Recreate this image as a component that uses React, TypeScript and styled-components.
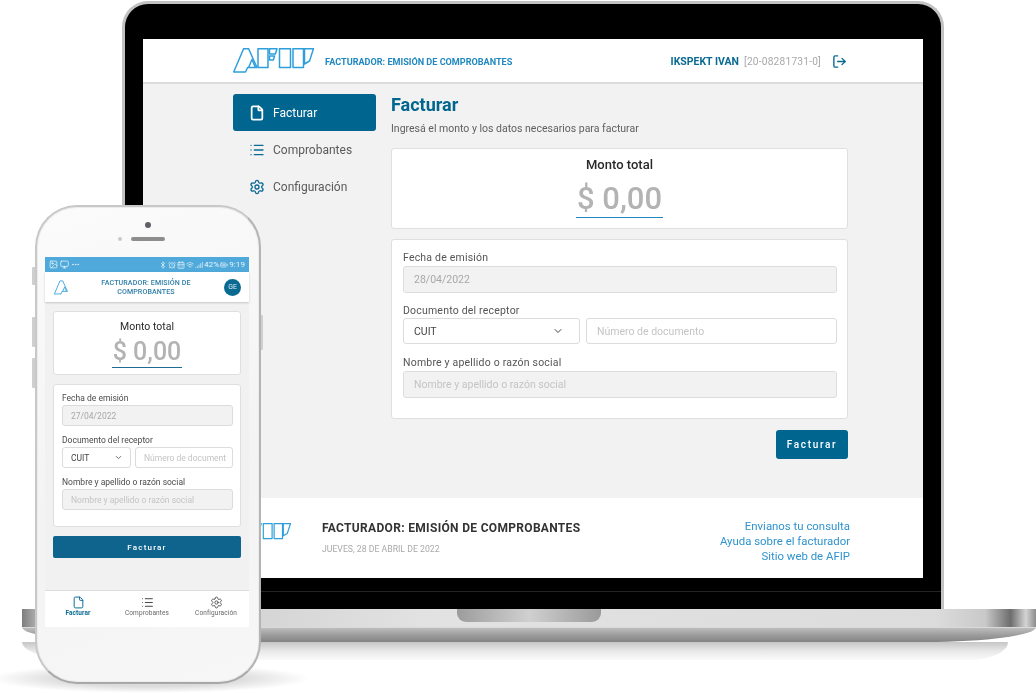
import styled, { createGlobalStyle } from 'styled-components';
import {
    File, List, Settings, LogOut, ChevronDown, Image, Monitor, Ellipsis,
    Bluetooth, AlarmClock, CalendarDays, Wifi, Signal, BatteryFull,
} from 'lucide-react';

const Global = createGlobalStyle`
    html, body { margin: 0; padding: 0; background: #fff; }
    * { box-sizing: border-box; }
    body { font-family: Roboto, "Liberation Sans", sans-serif; }
`;

const Stage = styled.div`
    position: relative;
    width: 1036px;
    height: 693px;
    overflow: hidden;
    background: #fff;
    padding-top: 1px;
`;

/* laptop */
const Lid = styled.div`
    margin-left: 122px;
    width: 822px;
    height: 608px;
    display: flex;
    flex-direction: column;
    padding: 35px 18px 0;
    background: #000;
    border: 3px solid #c2c2c2;
    border-bottom: 0;
    border-radius: 26px 26px 0 0;
`;

const Screen = styled.div`
    height: 539px;
    flex: none;
    display: flex;
    flex-direction: column;
    background: #f2f2f2;
    filter: blur(0.3px);
`;

const HingeLine = styled.div`
    height: 1px;
    margin: 13px -18px 0;
    background: #242424;
`;

const Base = styled.div`
    margin-left: 22px;
    width: 1014px;
`;

const Deck = styled.div`
    height: 18px;
    padding-left: 435px;
    background: linear-gradient(90deg, #7d7d7d 0, #c4c4c4 2%, #e2e2e2 40%, #dcdcdc 90%, #c9c9c9 95%, #6d6d6d 97.5%, #d4d4d4 99%, #8c8c8c 100%);
`;

const Notch = styled.div`
    width: 144px;
    height: 13px;
    border-radius: 0 0 9px 9px;
    background: linear-gradient(90deg, #9c9c9c, #d0d0d0 50%, #9a9a9a);
`;

const DeckFront = styled.div`
    height: 15px;
    border-radius: 0 0 110px 110px / 0 0 15px 15px;
    border-top: 1px solid #d9d9d9;
    background: linear-gradient(180deg, #bdbdbd 0, #a0a0a0 45%, #828282 100%);
`;

const DeckShadow = styled.div`
    width: 986px;
    height: 18px;
    border-radius: 0 0 40px 60px / 0 0 18px 18px;
    background: linear-gradient(180deg, #c6c6c6 0, #e8e8e8 50%, #fafafa 100%);
`;

/* desktop app */
const TopBar = styled.header`
    height: 45px;
    flex: none;
    display: flex;
    align-items: center;
    padding: 0 76px 1px 90px;
    background: #fff;
    border-bottom: 2px solid #dcdcdc;
`;

const LogoSvg = styled.svg<{ $w: number; $h: number }>`
    width: ${p => p.$w}px;
    height: ${p => p.$h}px;
    flex: none;
    fill: none;
    stroke: #2f9fdc;
    stroke-width: 1.5;
    stroke-linejoin: round;
`;

const AppName = styled.div`
    margin-left: 11px;
    margin-top: 4px;
    font-size: 9.1px;
    font-weight: 700;
    color: #1f88c0;
    white-space: nowrap;
`;

const UserBox = styled.div`
    margin-left: auto;
    margin-top: 2px;
    display: flex;
    align-items: center;
    color: #0a6a92;
`;

const UserName = styled.span`
    font-size: 10.5px;
    font-weight: 700;
`;

const UserCuit = styled.span`
    margin-left: 5px;
    margin-right: 11px;
    font-size: 10.2px;
    color: #a9a9a9;
    letter-spacing: 0.2px;
`;

const Body = styled.div`
    flex: 1;
    display: flex;
    padding: 10px 75px 0 90px;
`;

const Sidebar = styled.nav`
    width: 143px;
    flex: none;
    margin-right: 15px;
`;

const NavItem = styled.div<{ $active?: boolean }>`
    height: 37px;
    display: flex;
    align-items: center;
    gap: 8px;
    padding-left: 16px;
    border-radius: 3px;
    font-size: 12px;
    background: ${p => (p.$active ? '#00658f' : 'transparent')};
    color: ${p => (p.$active ? '#fff' : '#5a5a5a')};
    svg { color: ${p => (p.$active ? '#fff' : '#0a6a92')}; flex: none; }
`;

const Main = styled.main`
    width: 457px;
    flex: none;
`;

const PageTitle = styled.h1`
    margin: 0;
    font-size: 18px;
    line-height: 21px;
    font-weight: 700;
    color: #00658f;
`;

const PageHint = styled.p`
    margin: 7px 0 13px;
    font-size: 10.5px;
    line-height: 13px;
    color: #5f5f5f;
`;

const Card = styled.section`
    background: #fff;
    border: 1px solid #dfdfdf;
    border-radius: 3px;
`;

const AmountCard = styled(Card)`
    height: 81px;
    display: flex;
    flex-direction: column;
    align-items: center;
    padding-top: 8px;
    margin-bottom: 10px;
`;

const AmountLabel = styled.div`
    font-size: 13px;
    line-height: 15px;
    font-weight: 500;
    color: #2a2a2a;
`;

const AmountValue = styled.div`
    margin-top: 8px;
    width: 87px;
    text-align: center;
    font-size: 31px;
    line-height: 37px;
    font-weight: 500;
    color: #b3b3b3;
    white-space: nowrap;
    border-bottom: 1px solid #1f8ac0;
`;

const FormCard = styled(Card)`
    height: 180px;
    padding: 10px 10px 0 11px;
`;

const Label = styled.div`
    font-size: 10.5px;
    line-height: 15px;
    color: #555;
    letter-spacing: 0.2px;
`;

const Field = styled.div<{ $disabled?: boolean; $grow?: boolean; $hint?: boolean }>`
    height: 27px;
    display: flex;
    align-items: center;
    padding: 0 10px;
    margin-top: 1px;
    border: 1px solid #dcdcdc;
    border-radius: 3px;
    font-size: 10.5px;
    white-space: nowrap;
    overflow: hidden;
    background: ${p => (p.$disabled ? '#f2f2f2' : '#fff')};
    color: ${p => (p.$hint ? '#c4c4c4' : p.$disabled ? '#a8a8a8' : '#444')};
    ${p => p.$grow && 'flex: 1;'}
`;

const RowField = styled(Field)`
    height: 26px;
    margin-top: 0;
`;

const SelectField = styled(RowField)`
    width: 177px;
    flex: none;
    justify-content: space-between;
    svg { color: #444; margin-right: 5px; }
`;

const FieldRow = styled.div`
    display: flex;
    gap: 6px;
`;

const Group = styled.div`
    margin-bottom: 10px;
`;

const RowGroup = styled(Group)`
    margin-bottom: 11px;
`;

const Actions = styled.div`
    display: flex;
    justify-content: flex-end;
    margin-top: 11px;
`;

const SubmitButton = styled.button`
    width: 72px;
    height: 29px;
    padding: 0;
    border: 0;
    border-radius: 3px;
    background: #00658f;
    color: #fff;
    font-family: inherit;
    font-size: 10px;
    font-weight: 500;
    letter-spacing: 1.7px;
`;

const Footer = styled.footer`
    height: 80px;
    flex: none;
    display: flex;
    align-items: center;
    padding: 0 73px 0 83px;
    background: #fff;
`;

const FooterLogo = styled.div`
    display: flex;
    margin-bottom: 10px;
`;

const FooterText = styled.div`
    margin-left: 31px;
    margin-top: -1px;
`;

const FooterTitle = styled.div`
    font-size: 12px;
    line-height: 14px;
    font-weight: 700;
    color: #333;
    letter-spacing: 0.32px;
`;

const FooterDate = styled.div`
    margin-top: 8px;
    font-size: 8.7px;
    line-height: 12px;
    color: #a9a9a9;
`;

const FooterLinks = styled.div`
    margin-left: auto;
    margin-top: 7px;
    display: flex;
    flex-direction: column;
    text-align: right;
    font-size: 11.4px;
    line-height: 15px;
    color: #2f93cc;
`;

/* phone */
const PhoneShadow = styled.div`
    position: absolute;
    left: -10px;
    top: 664px;
    width: 320px;
    height: 29px;
    border-radius: 50%;
    background: radial-gradient(closest-side, #dcdcdc 55%, rgba(255, 255, 255, 0));
`;

const SideKey = styled.div<{ $top: number; $h: number; $right?: boolean }>`
    position: absolute;
    top: ${p => p.$top}px;
    height: ${p => p.$h}px;
    width: 4px;
    ${p => (p.$right ? 'left: 259px;' : 'left: 32px;')}
    background: #cfcfcf;
    border-radius: 1px;
`;

const Phone = styled.div`
    position: absolute;
    left: 35px;
    top: 205px;
    width: 226px;
    height: 479px;
    display: flex;
    flex-direction: column;
    padding: 0 10px;
    background: linear-gradient(160deg, #fbfbfb, #f3f3f3 60%, #f7f7f7);
    border: 2px solid #c8c8c8;
    border-bottom-color: #a8a8a8;
    border-right-color: #b4b4b4;
    border-radius: 42px;
    box-shadow: inset 0 0 0 1px #ececec;
`;

const PhoneTop = styled.div`
    height: 50px;
    flex: none;
    display: flex;
    flex-direction: column;
    align-items: center;
    padding-top: 15px;
`;

const Camera = styled.div`
    width: 6px;
    height: 6px;
    border-radius: 50%;
    background: #5d6166;
`;

const SpeakerRow = styled.div`
    position: relative;
    margin-top: 9px;
    width: 34px;
    height: 4px;
    border-radius: 2px;
    background: #8d8d8d;
`;

const SpeakerDot = styled.div`
    position: absolute;
    left: -13px;
    top: 0;
    width: 4px;
    height: 4px;
    border-radius: 50%;
    background: #c9c9c9;
`;

const PhoneScreen = styled.div`
    margin: 0 -2px;
    width: 204px;
    height: 370px;
    flex: none;
    display: flex;
    flex-direction: column;
    background: #f1f1f1;
    filter: blur(0.3px);
`;

const StatusBar = styled.div`
    height: 15px;
    flex: none;
    display: flex;
    align-items: center;
    gap: 2px;
    padding: 0 4px;
    background: #4fa9da;
    color: #e8f4fa;
    font-size: 8px;
    letter-spacing: 0.1px;
`;

const StatusRight = styled.div`
    margin-left: auto;
    display: flex;
    align-items: center;
    gap: 1px;
`;

const PhoneHeader = styled.div`
    height: 30px;
    flex: none;
    display: flex;
    align-items: center;
    padding: 0 8px 0 9px;
    background: #fff;
    box-shadow: 0 1px 2px rgba(0, 0, 0, 0.18);
`;

const PhoneTitle = styled.div`
    flex: 1;
    text-align: center;
    font-size: 7.1px;
    line-height: 9px;
    font-weight: 500;
    color: #2f7ea8;
    letter-spacing: 0.1px;
`;

const Avatar = styled.div`
    width: 17px;
    height: 17px;
    display: flex;
    align-items: center;
    justify-content: center;
    border-radius: 50%;
    background: #0a6a92;
    color: #dcecf3;
    font-size: 7px;
`;

const PhoneContent = styled.div`
    flex: 1;
    padding: 9px 8px 0;
`;

const PhoneAmountCard = styled(Card)`
    height: 64px;
    display: flex;
    flex-direction: column;
    align-items: center;
    padding-top: 8px;
    margin-bottom: 9px;
`;

const PhoneAmountLabel = styled.div`
    font-size: 10.5px;
    line-height: 13px;
    color: #2a2a2a;
`;

const PhoneAmountValue = styled.div`
    margin-top: 4px;
    width: 70px;
    text-align: center;
    font-size: 25px;
    line-height: 30px;
    font-weight: 500;
    color: #b3b3b3;
    white-space: nowrap;
    border-bottom: 1px solid #1d6c93;
`;

const PhoneFormCard = styled(Card)`
    height: 143px;
    padding: 8px 7px 0 8px;
`;

const PhoneLabel = styled.div`
    font-size: 8.5px;
    line-height: 11px;
    color: #4a4a4a;
`;

const PhoneGroup = styled.div`
    margin-bottom: 9px;
`;

const PhoneField = styled(Field)`
    height: 21px;
    margin-top: 1px;
    padding: 0 8px;
    font-size: 8.5px;
`;

const PhoneSelect = styled(PhoneField)`
    width: 69px;
    flex: none;
    justify-content: space-between;
    padding-right: 7px;
    color: #444;
    svg { color: #444; }
`;

const PhoneRow = styled.div`
    display: flex;
    gap: 4px;
`;

const PhoneButton = styled.button`
    display: block;
    width: 188px;
    height: 22px;
    margin-top: 9px;
    padding: 0;
    border: 0;
    border-radius: 2px;
    background: #0e648c;
    color: #fff;
    font-family: inherit;
    font-size: 8px;
    font-weight: 500;
    letter-spacing: 1.2px;
`;

const BottomNav = styled.div`
    height: 37px;
    flex: none;
    display: grid;
    grid-template-columns: 66px 72px 66px;
    padding-top: 5px;
    background: #fff;
    border-top: 1px solid #dcdcdc;
`;

const BottomItem = styled.div<{ $active?: boolean }>`
    display: flex;
    flex-direction: column;
    align-items: center;
    gap: 0;
    font-size: 6.5px;
    line-height: 9px;
    font-weight: ${p => (p.$active ? 700 : 400)};
    color: ${p => (p.$active ? '#0a6a92' : '#666')};
    letter-spacing: 0.1px;
    svg { color: ${p => (p.$active ? '#0a6a92' : '#444')}; }
`;

const AfipMark = () => (
    <>
        <path d="M.7 24 10.6.7h5L24 19.5H14.6L12.5 24Z" />
        <path d="M15.6 19.5 19 11.5l3.4 8" />
    </>
);

const AfipLogo = ({ w, h }: { w: number; h: number }) => (
    <LogoSvg $w={w} $h={h} viewBox="0 0 81 25">
        <AfipMark />
        <path d="M25 .7H35V19.5H25Z" />
        <path d="M36.5.7H44L42.4 6H36.5Z" />
        <path d="M36.5 8H41.6L40.3 12H36.5Z" />
        <path d="M46.5.7H57.5V19.5H46.5Z" />
        <path d="M60 .7H70.5V19.5H60Z" />
        <path d="M71.5.7H80.5L76.5 13 71.5 16Z" />
    </LogoSvg>
);

const DesktopApp = () => (
    <Screen>
        <TopBar>
            <AfipLogo w={81} h={25} />
            <AppName>FACTURADOR: EMISIÓN DE COMPROBANTES</AppName>
            <UserBox>
                <UserName>IKSPEKT IVAN</UserName>
                <UserCuit>[20-08281731-0]</UserCuit>
                <LogOut size={15} strokeWidth={2.2} />
            </UserBox>
        </TopBar>
        <Body>
            <Sidebar>
                <NavItem $active><File size={16} strokeWidth={2.6} />Facturar</NavItem>
                <NavItem><List size={16} strokeWidth={2} />Comprobantes</NavItem>
                <NavItem><Settings size={16} strokeWidth={2} />Configuración</NavItem>
            </Sidebar>
            <Main>
                <PageTitle>Facturar</PageTitle>
                <PageHint>Ingresá el monto y los datos necesarios para facturar</PageHint>
                <AmountCard>
                    <AmountLabel>Monto total</AmountLabel>
                    <AmountValue>$ 0,00</AmountValue>
                </AmountCard>
                <FormCard>
                    <Group>
                        <Label>Fecha de emisión</Label>
                        <Field $disabled>28/04/2022</Field>
                    </Group>
                    <RowGroup>
                        <Label>Documento del receptor</Label>
                        <FieldRow>
                            <SelectField>CUIT<ChevronDown size={12} /></SelectField>
                            <RowField $grow $hint>Número de documento</RowField>
                        </FieldRow>
                    </RowGroup>
                    <Group>
                        <Label>Nombre y apellido o razón social</Label>
                        <Field $disabled $hint>Nombre y apellido o razón social</Field>
                    </Group>
                </FormCard>
                <Actions><SubmitButton>Facturar</SubmitButton></Actions>
            </Main>
        </Body>
        <Footer>
            <FooterLogo><AfipLogo w={65} h={20} /></FooterLogo>
            <FooterText>
                <FooterTitle>FACTURADOR: EMISIÓN DE COMPROBANTES</FooterTitle>
                <FooterDate>JUEVES, 28 DE ABRIL DE 2022</FooterDate>
            </FooterText>
            <FooterLinks>
                <span>Envianos tu consulta</span>
                <span>Ayuda sobre el facturador</span>
                <span>Sitio web de AFIP</span>
            </FooterLinks>
        </Footer>
    </Screen>
);

const MobileApp = () => (
    <PhoneScreen>
        <StatusBar>
            <Image size={9} /><Monitor size={9} /><Ellipsis size={9} />
            <StatusRight>
                <Bluetooth size={8} /><AlarmClock size={8} /><CalendarDays size={8} />
                <Wifi size={8} /><Signal size={8} />
                <span>42%</span><BatteryFull size={8} /><span>9:19</span>
            </StatusRight>
        </StatusBar>
        <PhoneHeader>
            <LogoSvg $w={14} $h={15} viewBox="0 0 25 25"><AfipMark /></LogoSvg>
            <PhoneTitle>FACTURADOR: EMISIÓN DE<br />COMPROBANTES</PhoneTitle>
            <Avatar>GE</Avatar>
        </PhoneHeader>
        <PhoneContent>
            <PhoneAmountCard>
                <PhoneAmountLabel>Monto total</PhoneAmountLabel>
                <PhoneAmountValue>$ 0,00</PhoneAmountValue>
            </PhoneAmountCard>
            <PhoneFormCard>
                <PhoneGroup>
                    <PhoneLabel>Fecha de emisión</PhoneLabel>
                    <PhoneField $disabled>27/04/2022</PhoneField>
                </PhoneGroup>
                <PhoneGroup>
                    <PhoneLabel>Documento del receptor</PhoneLabel>
                    <PhoneRow>
                        <PhoneSelect>CUIT<ChevronDown size={9} /></PhoneSelect>
                        <PhoneField $grow $hint>Número de document</PhoneField>
                    </PhoneRow>
                </PhoneGroup>
                <PhoneGroup>
                    <PhoneLabel>Nombre y apellido o razón social</PhoneLabel>
                    <PhoneField $disabled $hint>Nombre y apellido o razón social</PhoneField>
                </PhoneGroup>
            </PhoneFormCard>
            <PhoneButton>Facturar</PhoneButton>
        </PhoneContent>
        <BottomNav>
            <BottomItem $active><File size={13} strokeWidth={1.8} />Facturar</BottomItem>
            <BottomItem><List size={13} strokeWidth={1.8} />Comprobantes</BottomItem>
            <BottomItem><Settings size={13} strokeWidth={1.6} />Configuración</BottomItem>
        </BottomNav>
    </PhoneScreen>
);

export default function App() {
    return (
        <Stage>
            <Global />
            <Lid>
                <DesktopApp />
                <HingeLine />
            </Lid>
            <Base>
                <Deck><Notch /></Deck>
                <DeckFront />
                <DeckShadow />
            </Base>
            <PhoneShadow />
            <SideKey $top={267} $h={18} />
            <SideKey $top={317} $h={30} />
            <SideKey $top={358} $h={30} />
            <SideKey $top={315} $h={35} $right />
            <Phone>
                <PhoneTop>
                    <Camera />
                    <SpeakerRow><SpeakerDot /></SpeakerRow>
                </PhoneTop>
                <MobileApp />
            </Phone>
        </Stage>
    );
}
